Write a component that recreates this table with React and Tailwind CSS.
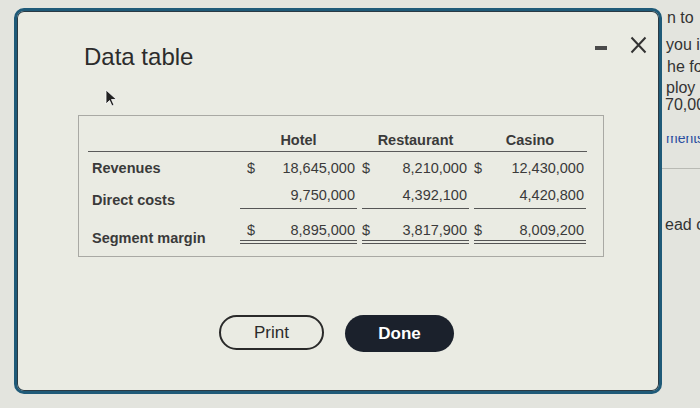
import React from "react";

const rows = [
  { label: "Revenues", dollar: true, values: ["18,645,000", "8,210,000", "12,430,000"], line: "", labelPad: "pt-0" },
  { label: "Direct costs", dollar: false, values: ["9,750,000", "4,392,100", "4,420,800"], line: "single", labelPad: "pt-[5px]" },
  { label: "Segment margin", dollar: true, values: ["8,895,000", "3,817,900", "8,009,200"], line: "double", labelPad: "pt-[8px]" },
];

const groupWidths = ["w-[117px]", "w-[107px]", "w-[112px]"];

function Cursor() {
  return (
    <svg className="absolute left-[88px] top-[78px]" width="14" height="18" viewBox="0 0 14 18">
      <path d="M1 1 L1 15 L4.5 11.5 L7 17 L9 16 L6.5 10.5 L11.5 10.5 Z" fill="#222" stroke="#fff" strokeWidth="0.8" />
    </svg>
  );
}

function DataTable() {
  return (
    <div className="-ml-[3px] w-[526px] border border-[#a9a9a4] pl-[9px] pr-[16px] pt-[15px] pb-[9px] text-[14.5px] text-[#3a3a3a]">
      {/* header */}
      <div className="flex border-b-[1.5px] border-[#5a5a5a] pb-[2px]">
        <div className="w-[152px]" />
        {["Hotel", "Restaurant", "Casino"].map((h, i) => (
          <div key={h} className={`${groupWidths[i]} ${i > 0 ? "ml-[5px]" : ""} text-center font-bold leading-[18px]`}>
            {h}
          </div>
        ))}
      </div>

      {rows.map((row, r) => (
        <div key={row.label} className={`flex items-start ${r === 0 ? "mt-[7px]" : r === 1 ? "mt-[9px]" : "mt-[12px]"}`}>
          <div className={`w-[152px] ${row.labelPad} pl-[4px] font-bold leading-[18px]`}>{row.label}</div>
          {row.values.map((v, i) => (
            <div
              key={i}
              className={`${groupWidths[i]} ${i > 0 ? "ml-[5px]" : ""} flex justify-between leading-[18px] ${
                row.line === "single"
                  ? "border-b-[1.5px] border-[#555] pb-[4px]"
                  : row.line === "double"
                  ? "border-b-[4px] border-double border-[#555] pb-[1px]"
                  : ""
              }`}
            >
              <span className={i === 0 ? "pl-[7px]" : ""}>{row.dollar ? "$" : ""}</span>
              <span className="pr-[2px]">{v}</span>
            </div>
          ))}
        </div>
      ))}
    </div>
  );
}

export default function App() {
  return (
    <div className="relative flex h-[408px] w-[700px] overflow-hidden bg-[#e3e4de] font-['Liberation_Sans',Arial,sans-serif]">
      <div className="relative ml-[14px] mt-[8px] h-[386px] w-[648px] shrink-0 rounded-[10px] border-[3px] border-[#1f5a78] bg-[#eaebe3] shadow-[inset_0_0_0_1px_#2a3a44]">
        {/* window controls */}
        <div className="absolute left-[578px] top-[35px] h-[4px] w-[12px] bg-[#4a4a4a]" />
        <svg className="absolute left-[613px] top-[25px]" width="17" height="18" viewBox="0 0 17 18">
          <path d="M1.5 1.5 L15.5 16.5 M15.5 1.5 L1.5 16.5" stroke="#333" strokeWidth="2" />
        </svg>
        <Cursor />

        <div className="pl-[64px] pt-[31px]">
          <h2 className="ml-[3px] text-[24px] leading-[30px] text-[#2c2c2c]">Data table</h2>
          <div className="mt-[43px]">
            <DataTable />
          </div>
        </div>

        <div className="mt-[58px] flex justify-center gap-[21px] pr-[3px]">
          <button className="h-[35px] w-[105px] rounded-full border-2 border-[#2a2a2a] text-[17px] text-[#2a2a2a]">
            Print
          </button>
          <button className="h-[37px] w-[109px] rounded-full bg-[#1b212c] text-[17px] font-semibold text-white">
            Done
          </button>
        </div>
      </div>

      {/* page behind the dialog */}
      <div className="relative flex-1 overflow-hidden pl-[7px] text-[16px] leading-[20px] text-[#333]">
        <div className="-ml-[2px] mt-[8px] whitespace-nowrap">n to</div>
        <div className="-ml-[3px] mt-[7px] whitespace-nowrap">you i</div>
        <div className="-ml-[2px] mt-[2px] whitespace-nowrap">he fo</div>
        <div className="-ml-[3px] mt-[1px] whitespace-nowrap">ploy</div>
        <div className="-ml-[4px] -mt-[3px] whitespace-nowrap">70,00</div>
        <div className="-ml-[3px] mt-[21px] h-[10px] overflow-hidden whitespace-nowrap text-[14px] leading-[16px] text-[#2a4fa0]">
          <span className="relative -top-[6px]">ments</span>
        </div>
        <div className="-ml-[7px] mt-[22px] border-t border-[#b9bab4]" />
        <div className="-ml-[4px] mt-[46px] whitespace-nowrap">ead co</div>
      </div>
    </div>
  );
}
